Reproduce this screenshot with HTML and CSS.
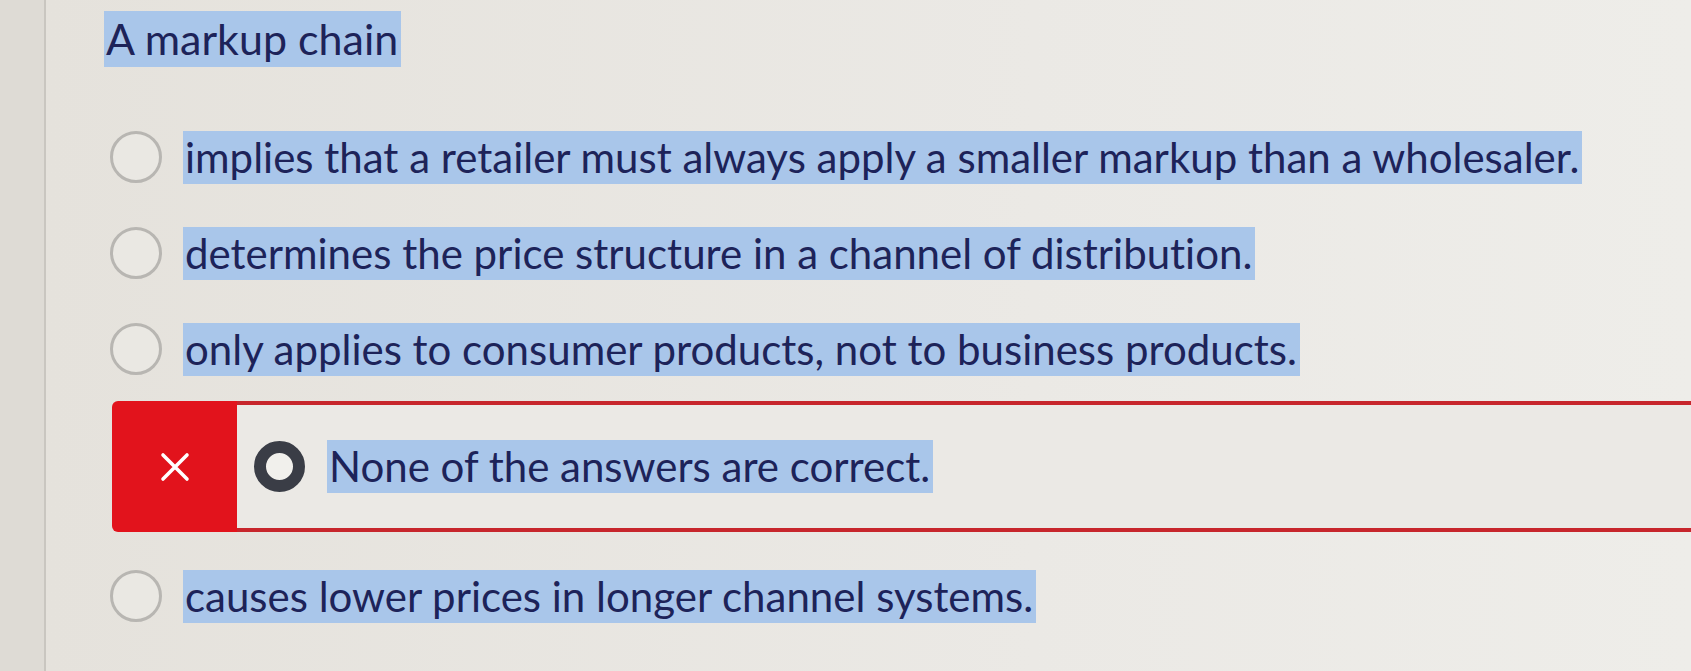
FILE: index.html
```html
<!DOCTYPE html>
<html lang="en">
<head>
    <meta charset="UTF-8">
    <meta name="viewport" content="width=device-width, initial-scale=1.0">
    <title>A markup chain</title>
    <link rel="stylesheet" href="styles.css">
</head>
<body>

<!-- Question panel -->
<div class="panel">
    <div class="question"><span class="sel">A markup chain</span></div>

    <ul class="choices">
        <li class="choice">
            <span class="radio"></span>
            <span class="sel">implies that a retailer must always apply a smaller markup than a wholesaler.</span>
        </li>
        <li class="choice">
            <span class="radio"></span>
            <span class="sel">determines the price structure in a channel of distribution.</span>
        </li>
        <li class="choice">
            <span class="radio"></span>
            <span class="sel">only applies to consumer products, not to business products.</span>
        </li>

        <!-- Selected answer, marked incorrect -->
        <li class="choice wrong">
            <div class="mark">
                <svg width="30" height="30" viewBox="0 0 30 30">
                    <path d="M3 3 L27 27 M27 3 L3 27" stroke="#fff" stroke-width="3.6" stroke-linecap="round" fill="none"/>
                </svg>
            </div>
            <div class="answer">
                <span class="radio checked"></span>
                <span class="sel">None of the answers are correct.</span>
            </div>
        </li>

        <li class="choice">
            <span class="radio"></span>
            <span class="sel">causes lower prices in longer channel systems.</span>
        </li>
    </ul>
</div>

</body>
</html>
```

FILE: styles.css
```css
* {
    margin: 0;
    padding: 0;
    box-sizing: border-box;
}

body, html {
    height: 100%;
    overflow: hidden;
}

body {
    background-color: #dedbd5;
    font-family: Lato, "Open Sans", sans-serif;
    font-variant-ligatures: none;
    color: #1d2359;
}

/* Main panel */
.panel {
    margin-left: 44px;
    height: 100%;
    padding: 11px 0 0 58px;
    border-left: 2px solid #c9c6c0;
    background: linear-gradient(90deg, #e5e2dc, #ebe9e5 60%, #eeede9);
}

/* Selected text */
.sel {
    display: inline-block;
    background-color: #a9c6ea;
    padding: 0 3px 0 2px;
}

.question .sel {
    font-size: 43px;
    line-height: 56px;
}

.choices {
    list-style: none;
    margin-top: 42px;
}

.choice {
    display: flex;
    align-items: center;
    gap: 21px;
    height: 96px;
    padding-left: 6px;
}

.choice .sel {
    font-size: 42px;
    line-height: 53px;
}

/* Radio buttons */
.radio {
    flex: none;
    width: 52px;
    height: 52px;
    border: 3px solid #b8b6b2;
    border-radius: 50%;
    background-color: #eae8e3;
}

.radio.checked {
    width: 51px;
    height: 51px;
    border: 12px solid #3a3d46;
    background-color: #f1f0ec;
}

/* Incorrect answer row */
.choice.wrong {
    height: 131px;
    margin: 4px 0 16px;
    padding-left: 8px;
    gap: 0;
    align-items: stretch;
}

.wrong .mark {
    flex: none;
    width: 125px;
    display: flex;
    justify-content: center;
    align-items: center;
    background-color: #e2131c;
    border-radius: 6px 0 0 6px;
}

.wrong .answer {
    flex: 1;
    display: flex;
    align-items: center;
    gap: 22px;
    padding-left: 17px;
    border-top: 4px solid #c7262c;
    border-bottom: 4px solid #c7262c;
    background-color: #ebe9e5;
}
```
